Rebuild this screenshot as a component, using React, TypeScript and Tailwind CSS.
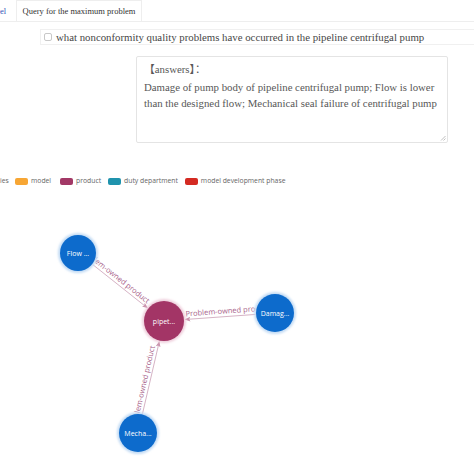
import React from "react";

const SERIF = "font-['Liberation_Serif','Noto_Sans_CJK_SC',serif]";

const LEGEND = [
  { label: "model", color: "bg-[#f7a634]", gap: "ml-[5px]" },
  { label: "product", color: "bg-[#a23866]", gap: "ml-[9px]" },
  { label: "duty department", color: "bg-[#1f93ad]", gap: "ml-[7px]" },
  { label: "model development phase", color: "bg-[#d42a22]", gap: "ml-[7px]" },
];

type Node = { x: number; y: number; r: number; label: string; fill: string; halo: string };

const NODES: Node[] = [
  { x: 78, y: 258, r: 18, label: "Flow ...", fill: "#0d6bcc", halo: "#c4dcf4" },
  { x: 275, y: 318, r: 19, label: "Damag...", fill: "#0d6bcc", halo: "#c4dcf4" },
  { x: 138, y: 438, r: 19, label: "Mecha...", fill: "#0d6bcc", halo: "#c4dcf4" },
  { x: 164, y: 326, r: 20, label: "pipet...", fill: "#a33566", halo: "#efcfdc" },
];

const EDGES = [
  { x1: 92, y1: 269, x2: 147.5, y2: 313, lx: 111.6, ly: 284.6, angle: 38.3 },
  { x1: 256, y1: 319.4, x2: 185, y2: 324.5, lx: 228.5, ly: 321.3, angle: -4.2 },
  { x1: 142.3, y1: 419.5, x2: 159.3, y2: 346.5, lx: 148.3, ly: 393.7, angle: -77 },
];

function Graph() {
  return (
    <svg width="474" height="279" viewBox="0 195 474 279" className="block">
      <defs>
        <marker
          id="arrow"
          viewBox="0 0 10 10"
          refX="9"
          refY="5"
          markerWidth="6"
          markerHeight="6"
          orient="auto"
        >
          <path d="M0,1 L10,5 L0,9 L2,5 z" fill="#c993ad" />
        </marker>
        <filter id="soft" x="-50%" y="-50%" width="200%" height="200%">
          <feGaussianBlur stdDeviation="1.2" />
        </filter>
      </defs>

      {EDGES.map((e, i) => (
        <g key={i}>
          <line
            x1={e.x1}
            y1={e.y1}
            x2={e.x2}
            y2={e.y2}
            stroke="#d6b3c5"
            strokeWidth="1"
            markerEnd="url(#arrow)"
          />
          <text
            transform={`translate(${e.lx},${e.ly}) rotate(${e.angle})`}
            y="-3"
            textAnchor="middle"
            fontSize="7.5"
            fill="#a8628a"
            style={{ fontFamily: "'Open Sans', sans-serif" }}
          >
            Problem-owned product
          </text>
        </g>
      ))}

      {NODES.map((n) => (
        <g key={n.label}>
          <circle cx={n.x} cy={n.y} r={n.r + 2} fill={n.halo} filter="url(#soft)" />
          <circle cx={n.x} cy={n.y} r={n.r} fill={n.fill} />
          <text
            x={n.x}
            y={n.y + 2.5}
            textAnchor="middle"
            fontSize="7"
            fill="#ffffff"
            style={{ fontFamily: "'Open Sans', sans-serif" }}
          >
            {n.label}
          </text>
        </g>
      ))}
    </svg>
  );
}

export default function App() {
  return (
    <div className="w-[474px] h-[474px] overflow-hidden bg-white">
      {/* tabs */}
      <div className="flex h-[22px] items-end border-b border-[#eeeeee]">
        <div className={`${SERIF} h-[20px] w-[16px] text-[8.5px] leading-[20px] text-[#3552b8]`}>el</div>
        <div
          className={`${SERIF} h-[21px] w-[126px] border-x border-t border-[#eeeeee] bg-white text-center text-[8.5px] leading-[20px] text-[#333333]`}
        >
          Query for the maximum problem
        </div>
      </div>

      {/* question */}
      <div className="ml-[40px] mt-[7px] flex h-[16px] items-center border-y border-l border-[#f0f0f0]">
        <span className="ml-[3px] h-[8px] w-[8px] rounded-[2px] border border-[#c8c8c8] bg-white" />
        <span className={`${SERIF} ml-[4px] whitespace-nowrap text-[10.8px] leading-[14px] text-[#474747]`}>
          what nonconformity quality problems have occurred in the pipeline centrifugal pump
        </span>
      </div>

      {/* answer box */}
      <div className="relative ml-[136px] mt-[11px] h-[87px] w-[312px] rounded-[2px] border border-[#e4e4e4] px-[7px] pt-[4px]">
        <div className={`${SERIF} text-[10.8px] leading-[16px] text-[#585858]`}>
          <div className="whitespace-nowrap">【answers】：</div>
          <div className="mt-[2px] whitespace-nowrap">Damage of pump body of pipeline centrifugal pump; Flow is lower</div>
          <div className="whitespace-nowrap">than the designed flow; Mechanical seal failure of centrifugal pump</div>
        </div>
        <svg className="absolute bottom-[1px] right-[1px]" width="6" height="6" viewBox="0 0 6 6">
          <path d="M5.5 1 L1 5.5 M5.5 3.5 L3.5 5.5" stroke="#b0b0b0" strokeWidth="0.8" />
        </svg>
      </div>

      {/* legend */}
      <div className="mt-[33px] flex h-[10px] items-center font-['Open_Sans',sans-serif] text-[6.8px] leading-[10px] text-[#666666]">
        <span className="w-[10px] overflow-hidden whitespace-nowrap">ies</span>
        {LEGEND.map((l) => (
          <div key={l.label} className={`${l.gap} flex items-center gap-[3px]`}>
            <span className={`h-[7px] w-[13px] rounded-[2px] ${l.color}`} />
            <span className="whitespace-nowrap">{l.label}</span>
          </div>
        ))}
      </div>

      <div className="mt-[4px]">
        <Graph />
      </div>
    </div>
  );
}
